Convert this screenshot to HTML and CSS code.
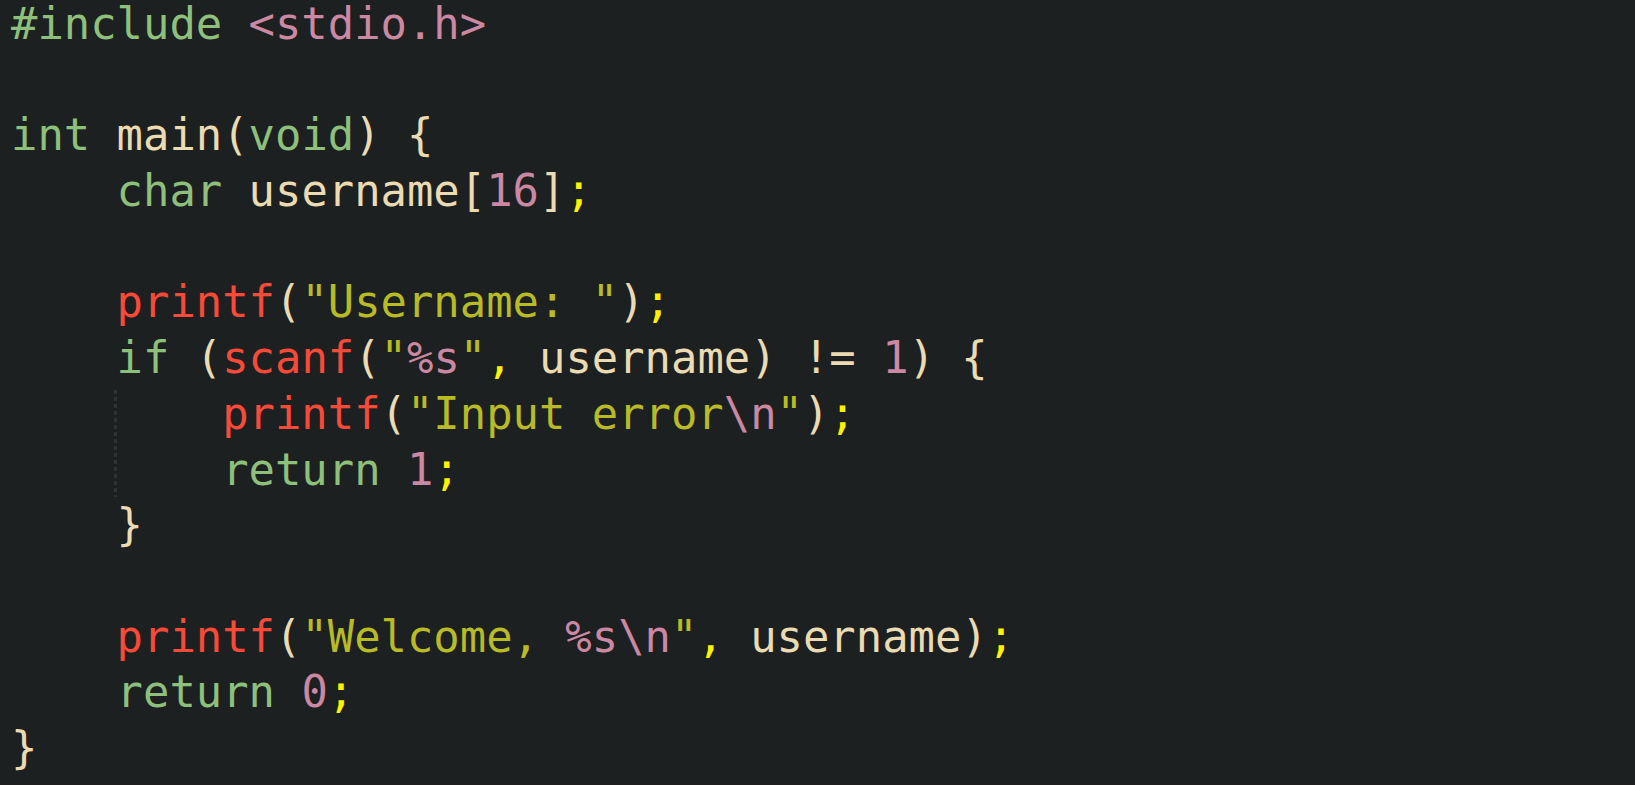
FILE: index.html
```html
<!DOCTYPE html>
<html>
<head>
<meta charset="utf-8">
<link rel="stylesheet" href="styles.css">
</head>
<body>
<div class="code">
<div class="ln"><span class="kw">#include</span> <span class="num">&lt;stdio.h&gt;</span></div>
<div class="ln"> </div>
<div class="ln"><span class="kw">int</span> <span class="id">main</span><span class="id">(</span><span class="kw">void</span><span class="id">)</span> <span class="id">{</span></div>
<div class="ln">    <span class="kw">char</span> <span class="id">username[</span><span class="num">16</span><span class="id">]</span><span class="semi">;</span></div>
<div class="ln"> </div>
<div class="ln">    <span class="fn">printf</span><span class="id">(</span><span class="str">"Username: "</span><span class="id">)</span><span class="semi">;</span></div>
<div class="ln">    <span class="kw">if</span> <span class="id">(</span><span class="fn">scanf</span><span class="id">(</span><span class="str">"</span><span class="num">%s</span><span class="str">"</span><span class="semi">,</span> <span class="id">username) != </span><span class="num">1</span><span class="id">) {</span></div>
<div class="block">
<div class="ln">        <span class="fn">printf</span><span class="id">(</span><span class="str">"Input error</span><span class="num">\n</span><span class="str">"</span><span class="id">)</span><span class="semi">;</span></div>
<div class="ln">        <span class="kw">return</span> <span class="num">1</span><span class="semi">;</span></div>
</div>
<div class="ln">    <span class="id">}</span></div>
<div class="ln"> </div>
<div class="ln">    <span class="fn">printf</span><span class="id">(</span><span class="str">"Welcome, </span><span class="num">%s\n</span><span class="str">"</span><span class="semi">,</span> <span class="id">username)</span><span class="semi">;</span></div>
<div class="ln">    <span class="kw">return</span> <span class="num">0</span><span class="semi">;</span></div>
<div class="ln"><span class="id">}</span></div>
</div>
</body>
</html>
```
FILE: styles.css
```css
html, body {
  margin: 0;
  padding: 0;
  background: #1d2021;
  height: 100%;
  overflow: hidden;
}
.code {
  font-family: "DejaVu Sans Mono", "Liberation Mono", monospace;
  font-size: 43.85px;
  line-height: 55.7px;
  color: #ebdbb2;
  padding-left: 11px;
  margin-top: -4px;
}
.ln {
  white-space: pre;
  height: 55.7px;
}
.block {
  background-image: repeating-linear-gradient(to bottom, #303132 0 4px, transparent 4px 7px);
  background-size: 3px 100%;
  background-repeat: no-repeat;
  background-position: 103px 4px;
}
.kw { color: #8ec07c; }
.num { color: #cb88a2; }
.id { color: #ebdbb2; }
.fn { color: #f74a38; }
.str { color: #b8bb26; }
.semi { color: #fff200; }
```
